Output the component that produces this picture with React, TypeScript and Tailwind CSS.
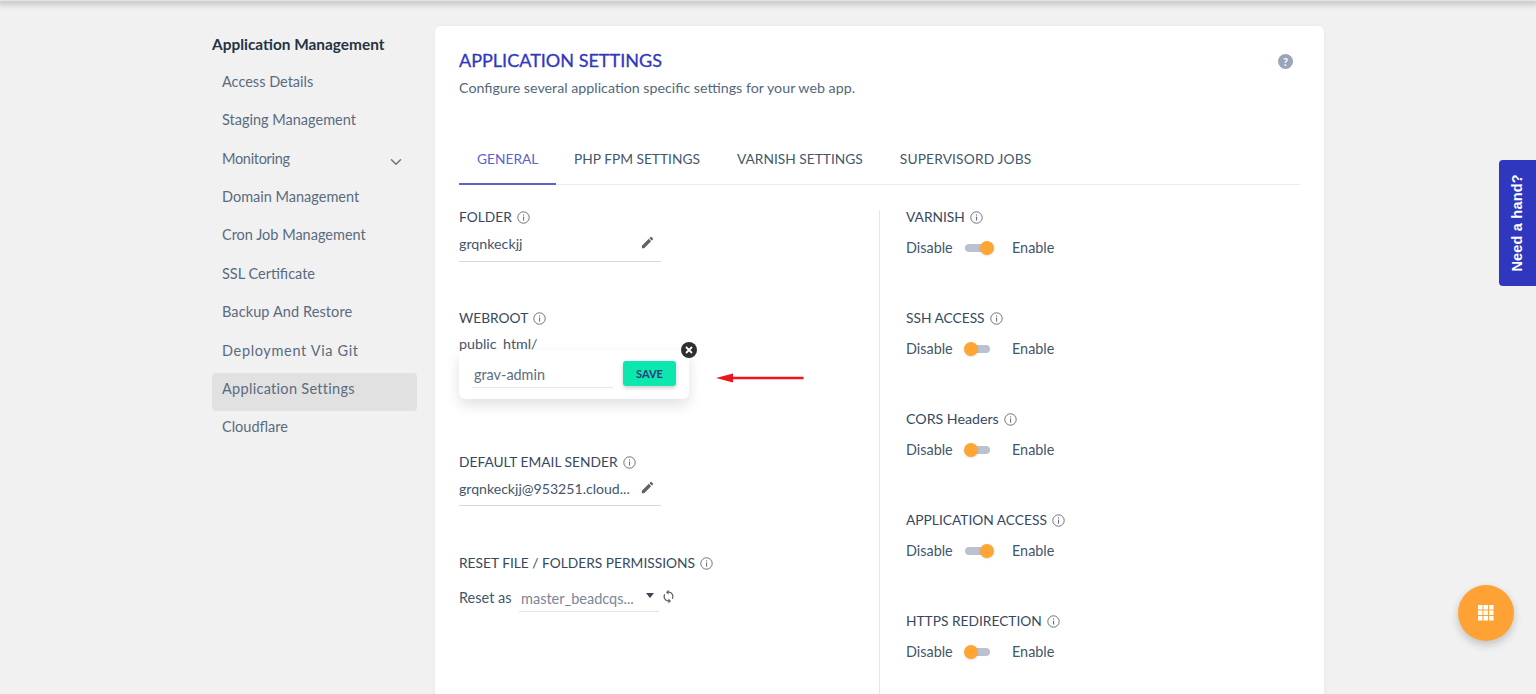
import React from "react";
import { ChevronDown } from "lucide-react";

const font = "font-['Lato','Noto_Sans',sans-serif]";

function Info() {
  return (
    <svg width="13" height="13" viewBox="0 0 13 13" fill="none" className="shrink-0">
      <circle cx="6.5" cy="6.5" r="5.7" stroke="#6b7280" strokeWidth="1" />
      <rect x="6" y="5.6" width="1.1" height="4" fill="#6b7280" />
      <rect x="6" y="3.4" width="1.1" height="1.2" fill="#6b7280" />
    </svg>
  );
}

function Pencil() {
  return (
    <svg width="15" height="15" viewBox="0 0 24 24" fill="#5f6368" className="shrink-0 -mt-[3px]">
      <path d="M3 17.25V21h3.75L17.81 9.94l-3.75-3.75L3 17.25zM20.71 7.04a1 1 0 0 0 0-1.41l-2.34-2.34a1 1 0 0 0-1.41 0l-1.83 1.83 3.75 3.75 1.83-1.83z" />
    </svg>
  );
}

function Label({ text, mixed }: { text: string; mixed?: boolean }) {
  return (
    <div className={`flex items-center gap-[5px] h-5 leading-5 text-[#35485f] ${mixed ? "text-[14.2px]" : "text-[13.75px]"}`}>
      <span>{text}</span>
      <Info />
    </div>
  );
}

function Toggle({ on }: { on: boolean }) {
  return (
    <div className="relative w-[25px] h-5 flex items-center">
      <div className="w-full h-2 rounded-full bg-[#bcc1d1]" />
      <div className={`absolute top-[3px] w-[14px] h-[14px] rounded-full bg-[#ffa534] shadow ${on ? "left-[15px]" : "left-[-1px]"}`} />
    </div>
  );
}

function SwitchBlock({ title, on, mixed }: { title: string; on: boolean; mixed?: boolean }) {
  return (
    <div className="h-[101px]">
      <Label text={title} mixed={mixed} />
      <div className="flex items-center mt-[11px] h-5 text-[14.4px] text-[#44566c]">
        <span className="w-[59px]">Disable</span>
        <Toggle on={on} />
        <span className="ml-[22px]">Enable</span>
      </div>
    </div>
  );
}

const items = [
  { t: "Access Details", c: "" },
  { t: "Staging Management", c: "" },
  { t: "Monitoring", c: "tracking-[-0.3px]" },
  { t: "Domain Management", c: "" },
  { t: "Cron Job Management", c: "" },
  { t: "SSL Certificate", c: "" },
  { t: "Backup And Restore", c: "tracking-[0.1px]" },
  { t: "Deployment Via Git", c: "tracking-[0.65px]" },
  { t: "Application Settings", c: "tracking-[0.3px]" },
  { t: "Cloudflare", c: "" },
];

export default function App() {
  return (
    <div className={`relative w-[1536px] h-[694px] overflow-hidden bg-[#f1f1f1] ${font}`}>
      <div className="absolute top-0 left-0 right-0 h-px bg-[#e4e4e4] shadow-[0_0_7px_3px_rgba(0,0,0,0.22)]" />
      <div className="flex pl-[212px] pt-[26px] gap-[18px]">
        <aside className="w-[205px] shrink-0 pt-[8px]">
          <div className="h-5 text-[15.4px] leading-5 font-bold text-[#243345]">Application Management</div>
          <nav className="mt-[11.5px]">
            {items.map(({ t, c }) => (
              <div
                key={t}
                className={`flex items-center justify-between h-[38.4px] pb-[6px] pl-[10px] pr-[12px] text-[14.5px] text-[#5a6b80] rounded-sm ${
                  t === "Application Settings" ? "bg-[#e1e1e1]" : ""
                }`}
              >
                <span className={c}>{t}</span>
                {t === "Monitoring" && <ChevronDown size={18} strokeWidth={2} className="text-[#6b7280] mt-[8px]" />}
              </div>
            ))}
          </nav>
        </aside>

        <main className="w-[889px] h-[680px] shrink-0 bg-white rounded-t-md px-6 pt-[22px] shadow-[0_0_4px_rgba(0,0,0,0.04)]">
          <div className="flex justify-between">
            <div>
              <h1 className="text-[18.05px] leading-6 font-normal text-[#3037c0] [-webkit-text-stroke:0.3px_#3037c0]">APPLICATION SETTINGS</h1>
              <p className="mt-[6px] text-[14.25px] leading-5 text-[#55677d]">Configure several application specific settings for your web app.</p>
            </div>
            <div className="mr-[7px] mt-[6px] w-[15px] h-[15px] rounded-full bg-[#9aa5b8] text-white text-[11px] leading-[15px] font-bold text-center">?</div>
          </div>

          <div className="flex mt-[36px] h-[51px] border-b border-[#ececf0] text-[13.75px] text-[#44566c]">
            <div className="w-[97px] pl-[18px] pt-[15px] h-[51px] border-b-2 border-[#5a62cc] text-[#5a62cc]">GENERAL</div>
            <div className="ml-[18px] pt-[15px]">PHP FPM SETTINGS</div>
            <div className="ml-[37px] pt-[15px]">VARNISH SETTINGS</div>
            <div className="ml-[37px] pt-[15px] tracking-[0.15px]">SUPERVISORD JOBS</div>
          </div>

          <div className="flex mt-[25px]">
            <div className="w-[420px] shrink-0">
              <div className="h-[101px] -mt-[3px]">
                <Label text="FOLDER" />
                <div className="w-[202px] h-[28px] mt-[7px] pb-[7px] flex items-center justify-between pr-[6px] border-b border-[#d4d7e0] text-[14.25px] text-[#44566c]">
                  <span>grqnkeckjj</span>
                  <Pencil />
                </div>
              </div>

              <div className="relative h-[144px]">
                <Label text="WEBROOT" />
                <div className="mt-[6px] h-5 leading-5 text-[14.25px] text-[#44566c]">public_html/</div>
                <div className="absolute left-0 top-[42px] w-[230px] h-[49px] bg-white rounded-md shadow-[0_6px_14px_rgba(0,0,0,0.12)] flex items-start pl-[13px]">
                  <div className="w-[141px] h-[38px] pt-[11px] leading-[28px] pl-[2px] border-b border-[#e4e6ec] text-[14.4px] text-[#5d6c82]">grav-admin</div>
                  <div className="ml-[10px] mt-[11px] w-[53px] h-[25px] rounded-[3px] bg-[#0ce8ad] shadow-[0_2px_4px_rgba(0,0,0,0.2)] text-center text-[11px] leading-[25px] font-bold text-[#2b3a80]">SAVE</div>
                  <div className="absolute right-[-8px] top-[-8px] w-4 h-4 rounded-full bg-[#2f2f2f] flex items-center justify-center">
                    <svg width="8" height="8" viewBox="0 0 8 8"><path d="M1 1l6 6M7 1L1 7" stroke="#fff" strokeWidth="1.8" /></svg>
                  </div>
                </div>
                <svg className="absolute left-[257px] top-[64px]" width="88" height="12" viewBox="0 0 88 12">
                  <path d="M0 6L17 1.5V4.7H87.5V7.3H17V10.5Z" fill="#ee1419" />
                </svg>
              </div>

              <div className="h-[101px]">
                <Label text="DEFAULT EMAIL SENDER" />
                <div className="w-[202px] h-[27px] mt-[7px] pb-[6px] flex items-center justify-between pr-[6px] border-b border-[#d4d7e0] text-[14.1px] text-[#44566c]">
                  <span>grqnkeckjj@953251.cloud...</span>
                  <Pencil />
                </div>
              </div>

              <div>
                <Label text="RESET FILE / FOLDERS PERMISSIONS" />
                <div className="flex items-start mt-[15px] text-[14.5px] text-[#44566c]">
                  <span className="leading-5 w-[60px]">Reset as</span>
                  <div className="relative w-[140px] h-[24px] border-b border-[#e2e4ea] pl-[2px] pt-[1px] leading-5 text-[#7a8698]">
                    master_beadcqs...
                    <div className="absolute right-[5px] top-[5px] w-0 h-0 border-x-[4.5px] border-x-transparent border-t-[5px] border-t-[#3c4654]" />
                  </div>
                  <svg className="ml-[2px] mt-[1px]" width="15" height="15" viewBox="0 0 24 24" fill="#5f6368">
                    <path d="M12 4V1L8 5l4 4V6c3.31 0 6 2.69 6 6 0 1.01-.25 1.97-.7 2.8l1.46 1.46A7.93 7.93 0 0 0 20 12c0-4.42-3.58-8-8-8zm0 14c-3.31 0-6-2.69-6-6 0-1.01.25-1.97.7-2.8L5.24 7.74A7.93 7.93 0 0 0 4 12c0 4.42 3.58 8 8 8v3l4-4-4-4v3z" />
                  </svg>
                </div>
              </div>
            </div>

            <div className="flex-1 border-l border-[#e6e6ea] pl-[26px] h-[484px]">
              <div className="-mt-[3px]">
                <SwitchBlock title="VARNISH" on />
                <SwitchBlock title="SSH ACCESS" on={false} />
                <SwitchBlock title="CORS Headers" on={false} mixed />
                <SwitchBlock title="APPLICATION ACCESS" on />
                <SwitchBlock title="HTTPS REDIRECTION" on={false} />
              </div>
            </div>
          </div>
        </main>
      </div>

      <div className="absolute right-0 top-[160px] w-[37px] h-[126px] bg-[#2f37bf] rounded-l-[4px] flex items-center justify-center">
        <span className="-rotate-90 whitespace-nowrap text-white text-[14.5px] font-bold font-['Liberation_Sans',sans-serif] tracking-[0.2px]">Need a hand?</span>
      </div>

      <div className="absolute left-[1458px] top-[585px] w-14 h-14 rounded-full bg-[#ffa235] shadow-[0_4px_8px_rgba(0,0,0,0.2)] flex items-center justify-center">
        <svg width="16" height="16" viewBox="0 0 16 16" fill="#fff">
          {[0, 5.5, 11].flatMap((y) => [0, 5.5, 11].map((x) => <rect key={`${x}-${y}`} x={x} y={y} width="4.5" height="4.5" />))}
        </svg>
      </div>
    </div>
  );
}
